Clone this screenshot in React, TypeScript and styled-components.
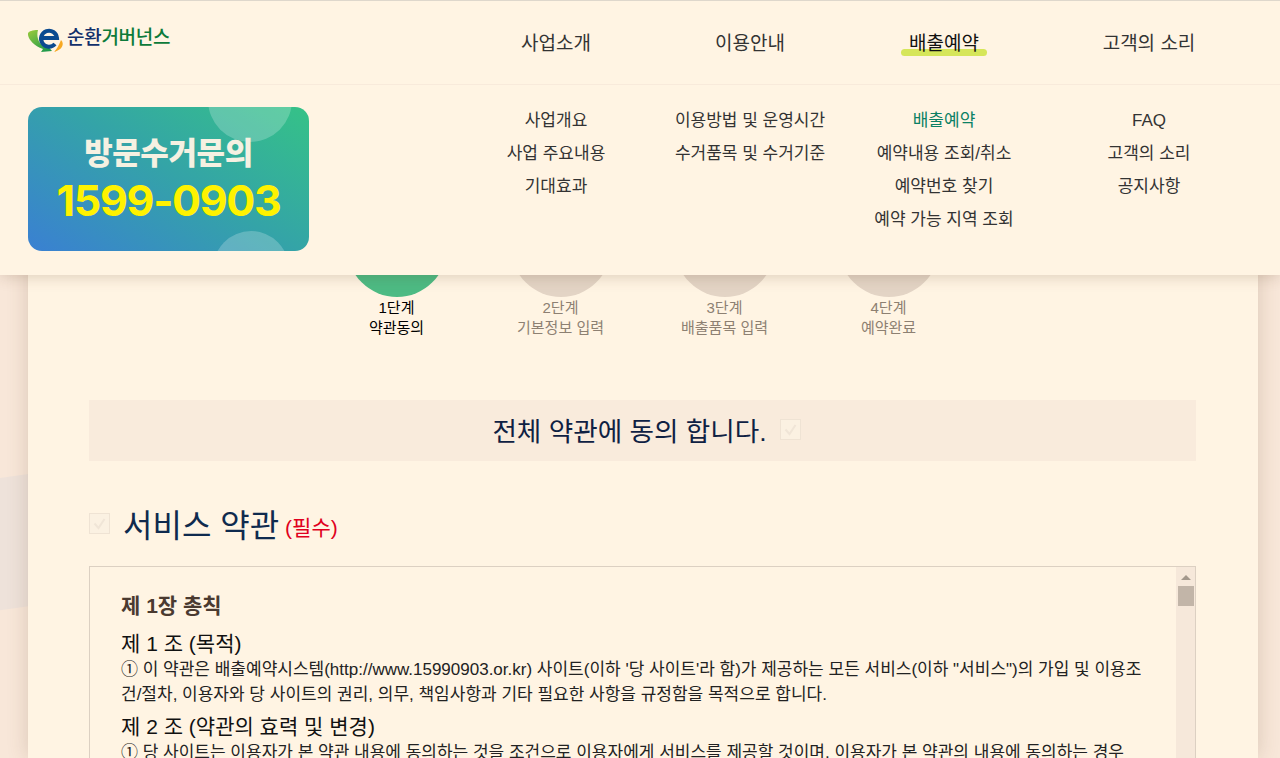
import React from 'react';
import styled, {createGlobalStyle} from 'styled-components';

const GlobalStyle = createGlobalStyle`
  html, body {
    margin: 0;
    padding: 0;
    background: #f8e7d9;
  }
  body {
    font-family: "Liberation Sans", "Noto Sans CJK KR", sans-serif;
    color: #111;
  }
`
const Page = styled.div`
  position: relative;
  width: 1280px;
  height: 758px;
  overflow: hidden;
  background: #f8e7d9;
`
const BackdropShape = styled.div`
  position: absolute;
  left: -60px;
  top: 473px;
  width: 200px;
  height: 131px;
  transform: rotate(-8deg);
  background: #eee2da;
`
const Header = styled.header`
  position: absolute;
  top: 0;
  left: 0;
  right: 0;
  height: 275px;
  box-sizing: border-box;
  border-top: 1px solid #ded7cc;
  background: #fff4e3;
  box-shadow: 0 2px 14px rgba(90, 60, 30, .2);
  z-index: 2;
`
const TopRow = styled.div`
  display: grid;
  grid-template-columns: 431px 194px 194px 194px 216px;
  height: 83px;
  padding-left: 28px;
  border-bottom: 1px solid #f8eadb;
`
const Logo = styled.div`
  display: flex;
  align-items: flex-start;
  gap: 1px;
  padding-top: 25px;
`
const LogoText = styled.span`
  margin-top: 1px;
  font-size: 19px;
  line-height: 22px;
  font-weight: 500;
  letter-spacing: -.3px;
  color: #0d7a3a;
  >b {
    font-weight: 500;
    color: #12306b;
  }
`
const NavItem = styled.div<{$active?: boolean}>`
  position: relative;
  justify-self: center;
  align-self: start;
  margin-top: 30px;
  font-size: 19px;
  line-height: 26px;
  white-space: nowrap;
  color: ${p => p.$active ? '#111' : '#333'};
  isolation: isolate;
  ${p => p.$active && `
    &::after {
      content: '';
      position: absolute;
      left: -8px;
      right: -8px;
      bottom: 1px;
      height: 7px;
      border-radius: 4px;
      background: #d6e65a;
      z-index: -1;
    }
  `}
`
const BottomRow = styled.div`
  display: grid;
  grid-template-columns: 431px 194px 194px 194px 216px;
  padding: 23px 0 0 28px;
`
const Banner = styled.div`
  position: relative;
  width: 281px;
  height: 144px;
  margin-top: -1px;
  border-radius: 14px;
  overflow: hidden;
  background: linear-gradient(32deg, #3a80d2 0%, #34a3a8 52%, #35c287 100%);
  display: flex;
  flex-direction: column;
  align-items: center;
  &::before, &::after {
    content: '';
    position: absolute;
    border-radius: 50%;
    background: rgba(255, 255, 255, .22);
  }
  &::before {
    width: 84px;
    height: 84px;
    top: -49px;
    left: 180px;
  }
  &::after {
    width: 76px;
    height: 76px;
    bottom: -56px;
    left: 185px;
  }
`
const BannerTitle = styled.div`
  margin-top: 24px;
  font-family: "Noto Sans CJK KR", sans-serif;
  font-size: 31px;
  line-height: 40px;
  font-weight: 900;
  letter-spacing: -.4px;
  color: #f5f1e2;
  position: relative;
  z-index: 1;
`
const BannerPhone = styled.div`
  margin-top: 3px;
  font-family: "Inter", sans-serif;
  font-size: 43px;
  line-height: 52px;
  font-weight: 700;
  letter-spacing: -1.3px;
  color: #fff200;
  position: relative;
  z-index: 1;
`
const SubColumn = styled.div`
  display: flex;
  flex-direction: column;
  align-items: center;
  margin-top: -4px;
`
const SubItem = styled.div<{$current?: boolean}>`
  font-size: 17px;
  line-height: 33px;
  white-space: nowrap;
  color: ${p => p.$current ? '#0b8064' : '#333'};
`
const Card = styled.main`
  position: relative;
  width: 1230px;
  height: 758px;
  margin-left: 28px;
  box-sizing: border-box;
  padding: 0 62px 0 61px;
  background: #fff4e3;
  box-shadow: 0 0 20px rgba(100, 70, 40, .2);
  overflow: hidden;
`
const Steps = styled.ol`
  display: flex;
  justify-content: center;
  margin: 0;
  padding: 197px 0 0;
  list-style: none;
`
const Step = styled.li<{$active?: boolean}>`
  width: 164px;
  display: flex;
  flex-direction: column;
  align-items: center;
  font-size: 15px;
  line-height: 20px;
  text-align: center;
  color: ${p => p.$active ? '#000' : '#8d8072'};
  &::before {
    content: '';
    width: 100px;
    height: 100px;
    margin-bottom: 1px;
    border-radius: 50%;
    background: ${p => p.$active ? '#4dbb84' : '#e3d4c5'};
  }
`
const AgreeAll = styled.div`
  display: flex;
  align-items: center;
  justify-content: center;
  gap: 13px;
  box-sizing: border-box;
  height: 61px;
  margin-top: 62px;
  padding: 0 0 2px 8px;
  background: #f9ebdc;
  font-size: 26.6px;
  color: #0f2143;
`
const CheckBox = styled.span`
  display: inline-flex;
  align-items: center;
  justify-content: center;
  box-sizing: border-box;
  width: 21px;
  height: 21px;
  border: 1px solid #efe3d4;
  background: #fbf1e2;
  flex: none;
`
const ServiceTitle = styled.div`
  display: flex;
  align-items: center;
  margin-top: 40px;
  height: 44px;
`
const ServiceName = styled.h2`
  margin: 0 6px 0 13px;
  font-size: 32px;
  font-weight: 400;
  color: #0f2a4e;
`
const Required = styled.span`
  font-size: 21px;
  color: #e00020;
  margin-top: 5px;
`
const TermsBox = styled.section`
  display: flex;
  justify-content: space-between;
  height: 300px;
  margin-top: 21px;
  border: 1px solid #dcd0c2;
`
const TermsText = styled.div`
  padding: 26px 0 0 31px;
  white-space: nowrap;
  overflow: hidden;
`
const Chapter = styled.h3`
  margin: 0 0 12px;
  font-size: 21px;
  line-height: 26px;
  font-weight: 700;
  color: #4a3a30;
`
const Article = styled.h4`
  margin: 0;
  font-size: 21px;
  line-height: 26px;
  font-weight: 400;
  color: #111;
`
const Para = styled.p`
  margin: 0 0 7px;
  font-size: 17px;
  line-height: 25px;
  color: #222;
`
const ScrollTrack = styled.div`
  width: 19px;
  display: flex;
  flex-direction: column;
  align-items: center;
  background: #f6e8da;
  flex: none;
`
const ScrollArrow = styled.span`
  width: 0;
  height: 0;
  margin-top: 8px;
  border-left: 5px solid transparent;
  border-right: 5px solid transparent;
  border-bottom: 5px solid #a3988c;
`
const ScrollThumb = styled.span`
  width: 16px;
  height: 20px;
  margin-top: 6px;
  background: #c2b5a8;
`

const Check = () => (
  <svg width="15" height="15" viewBox="0 0 15 15" fill="none">
    <path d="M2.5 7.5 L6.5 12 L12.5 3" stroke="#f0e5d7" strokeWidth="2"/>
  </svg>
)

const LogoMark = () => (
  <svg width="38" height="27" viewBox="0 0 38 27" fill="none">
    <defs>
      <linearGradient id="swoosh" x1="0" y1="0" x2="0.7" y2="1">
        <stop offset="0" stopColor="#9ccb3b"/>
        <stop offset="1" stopColor="#1f9a4b"/>
      </linearGradient>
    </defs>
    <path d="M10 4 C3 4 -1 6 0 9 C1 14 6 20 15 23 L13 26 L24 25 L18 18 L16 20 C11 18 8 11 10 4Z" fill="url(#swoosh)"/>
    <path d="M33 14 C37 18 34 24 26 26 C29 23 31 19 33 14Z" fill="#f7a823"/>
    <path d="M13.5 12 H29 A8 8 0 1 0 27 18" stroke="#0b4a8f" strokeWidth="4"/>
  </svg>
)

const menus = [
  {title: '사업소개', items: ['사업개요', '사업 주요내용', '기대효과']},
  {title: '이용안내', items: ['이용방법 및 운영시간', '수거품목 및 수거기준']},
  {title: '배출예약', items: ['배출예약', '예약내용 조회/취소', '예약번호 찾기', '예약 가능 지역 조회']},
  {title: '고객의 소리', items: ['FAQ', '고객의 소리', '공지사항']},
]

const steps = [
  ['1단계', '약관동의'],
  ['2단계', '기본정보 입력'],
  ['3단계', '배출품목 입력'],
  ['4단계', '예약완료'],
]

function App() {
  return (
    <Page>
      <GlobalStyle/>
      <BackdropShape/>
      <Header>
        <TopRow>
          <Logo>
            <LogoMark/>
            <LogoText><b>순환</b>거버넌스</LogoText>
          </Logo>
          {menus.map(m => <NavItem key={m.title} $active={m.title === '배출예약'}>{m.title}</NavItem>)}
        </TopRow>
        <BottomRow>
          <Banner>
            <BannerTitle>방문수거문의</BannerTitle>
            <BannerPhone>1599-0903</BannerPhone>
          </Banner>
          {menus.map(m =>
            <SubColumn key={m.title}>
              {m.items.map(item =>
                <SubItem key={item} $current={item === '배출예약'}>{item}</SubItem>
              )}
            </SubColumn>
          )}
        </BottomRow>
      </Header>
      <Card>
        <Steps>
          {steps.map(([step, name], i) =>
            <Step key={step} $active={i === 0}>
              <span>{step}</span>
              <span>{name}</span>
            </Step>
          )}
        </Steps>
        <AgreeAll>
          전체 약관에 동의 합니다.
          <CheckBox><Check/></CheckBox>
        </AgreeAll>
        <ServiceTitle>
          <CheckBox><Check/></CheckBox>
          <ServiceName>서비스 약관</ServiceName>
          <Required>(필수)</Required>
        </ServiceTitle>
        <TermsBox>
          <TermsText>
            <Chapter>제 1장 총칙</Chapter>
            <Article>제 1 조 (목적)</Article>
            <Para>
              ① 이 약관은 배출예약시스템(http://www.15990903.or.kr) 사이트(이하 '당 사이트'라 함)가 제공하는 모든 서비스(이하 "서비스")의 가입 및 이용조<br/>
              건/절차, 이용자와 당 사이트의 권리, 의무, 책임사항과 기타 필요한 사항을 규정함을 목적으로 합니다.
            </Para>
            <Article>제 2 조 (약관의 효력 및 변경)</Article>
            <Para>① 당 사이트는 이용자가 본 약관 내용에 동의하는 것을 조건으로 이용자에게 서비스를 제공할 것이며, 이용자가 본 약관의 내용에 동의하는 경우</Para>
          </TermsText>
          <ScrollTrack>
            <ScrollArrow/>
            <ScrollThumb/>
          </ScrollTrack>
        </TermsBox>
      </Card>
    </Page>
  );
}

export default App;
